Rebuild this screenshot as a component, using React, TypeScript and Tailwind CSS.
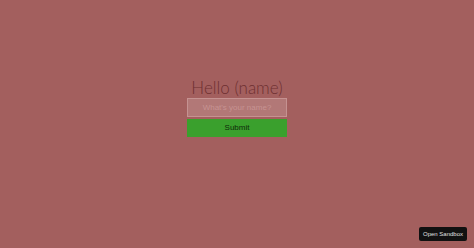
import React, { useState } from "react";

function App() {
  const [name, setName] = useState("");

  return (
    <div className="relative h-[248px] w-full bg-[#a35f5e] font-['Lato',sans-serif]">
      <div className="flex flex-col items-center pt-[78px]">
        <h1 className="text-[17px] font-light leading-[20px] text-[#6e2f31]">
          Hello {name ? name : "(name)"}
        </h1>
        <form
          className="flex w-[100px] flex-col gap-[2px]"
          onSubmit={(e) => e.preventDefault()}
        >
          <input
            value={name}
            onChange={(e) => setName(e.target.value)}
            placeholder="What's your name?"
            className="h-[19px] w-full border border-[#c59291] bg-[#b27877] px-1 text-center font-['Liberation_Sans',sans-serif] text-[8px] text-[#5a2a2a] outline-none placeholder:text-[#c69392]"
          />
          <button
            type="submit"
            className="h-[18px] w-full bg-[#3aa02d] font-['Liberation_Sans',sans-serif] text-[8px] text-[#0f2a0a]"
          >
            Submit
          </button>
        </form>
      </div>
      <button className="absolute bottom-[7px] right-[7px] h-[14px] rounded-[2px] bg-[#111111] px-[4px] font-['Liberation_Sans',sans-serif] text-[6px] leading-[14px] text-[#e0e0e0]">
        Open Sandbox
      </button>
    </div>
  );
}

export default App;
